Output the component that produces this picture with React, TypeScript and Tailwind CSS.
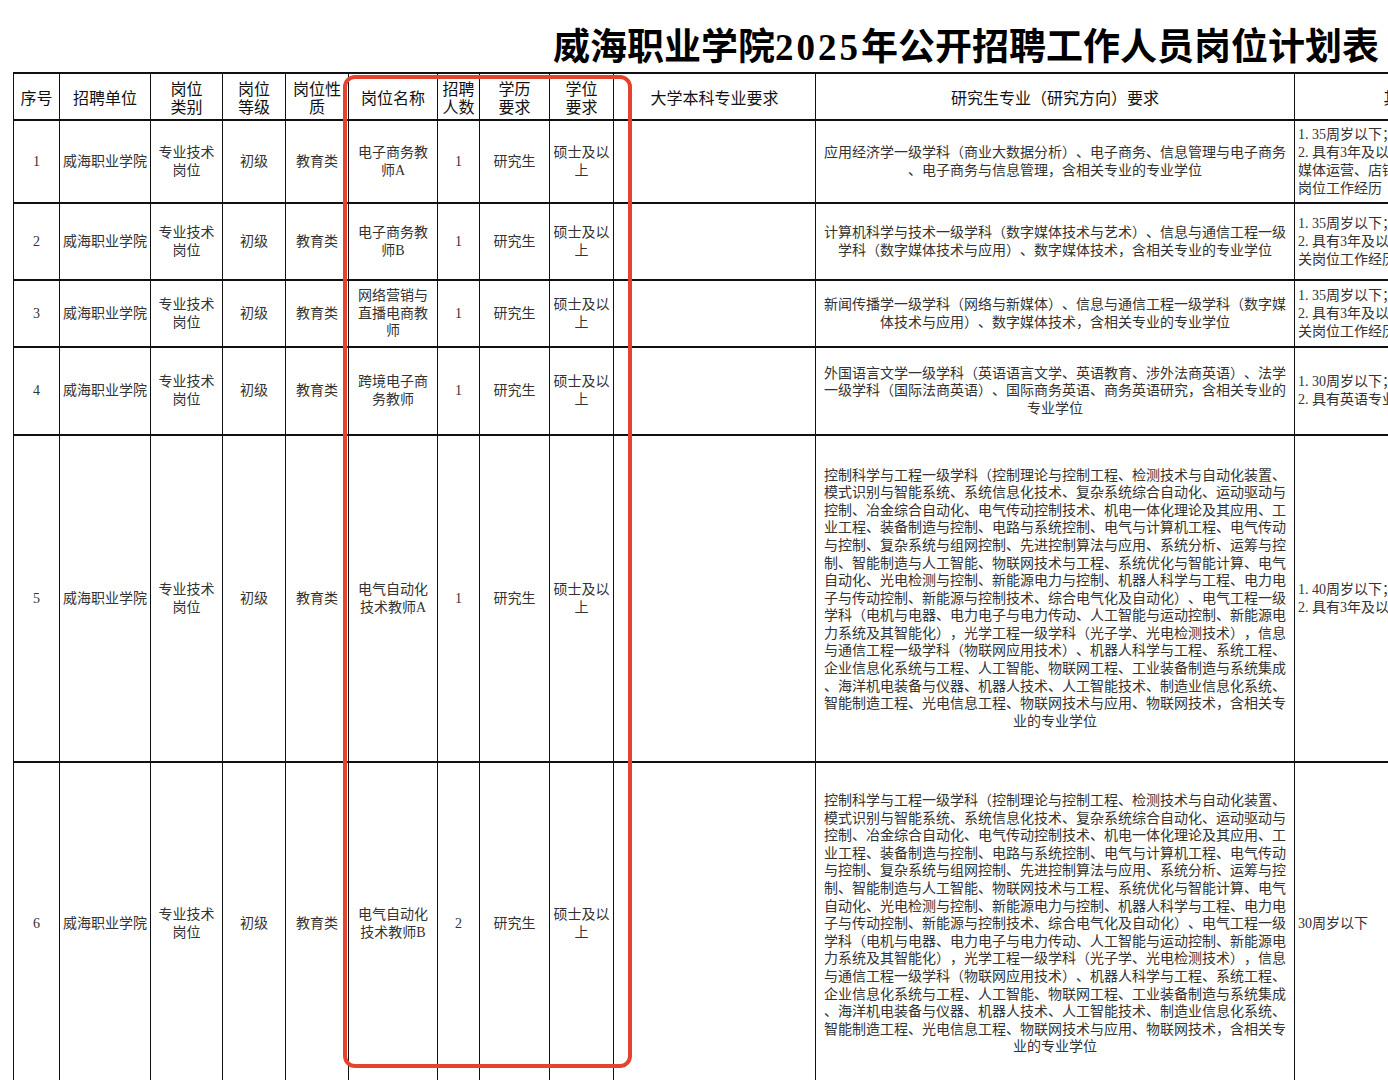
import React from "react";

type Row = {
  no: string;
  name: string[];
  count: string;
  h: string;
  research: string[];
  other: string[];
};

const rows: Row[] = [
  {
    no: "1",
    name: ["电子商务教", "师A"],
    count: "1",
    h: "h-[83px]",
    research: [
      "应用经济学一级学科（商业大数据分析）、电子商务、信息管理与电子商务",
      "、电子商务与信息管理，含相关专业的专业学位",
    ],
    other: ["1. 35周岁以下；", "2. 具有3年及以上电子商务、新", "媒体运营、店铺运营等相关", "岗位工作经历"],
  },
  {
    no: "2",
    name: ["电子商务教", "师B"],
    count: "1",
    h: "h-[77px]",
    research: [
      "计算机科学与技术一级学科（数字媒体技术与艺术）、信息与通信工程一级",
      "学科（数字媒体技术与应用）、数字媒体技术，含相关专业的专业学位",
    ],
    other: ["1. 35周岁以下；", "2. 具有3年及以上数字媒体相", "关岗位工作经历"],
  },
  {
    no: "3",
    name: ["网络营销与", "直播电商教", "师"],
    count: "1",
    h: "h-[67px]",
    research: [
      "新闻传播学一级学科（网络与新媒体）、信息与通信工程一级学科（数字媒",
      "体技术与应用）、数字媒体技术，含相关专业的专业学位",
    ],
    other: ["1. 35周岁以下；", "2. 具有3年及以上直播电商相", "关岗位工作经历"],
  },
  {
    no: "4",
    name: ["跨境电子商", "务教师"],
    count: "1",
    h: "h-[88px]",
    research: [
      "外国语言文学一级学科（英语语言文学、英语教育、涉外法商英语）、法学",
      "一级学科（国际法商英语）、国际商务英语、商务英语研究，含相关专业的",
      "专业学位",
    ],
    other: ["1. 30周岁以下；", "2. 具有英语专业八级证书"],
  },
];

const longResearch = [
  "控制科学与工程一级学科（控制理论与控制工程、检测技术与自动化装置、",
  "模式识别与智能系统、系统信息化技术、复杂系统综合自动化、运动驱动与",
  "控制、冶金综合自动化、电气传动控制技术、机电一体化理论及其应用、工",
  "业工程、装备制造与控制、电路与系统控制、电气与计算机工程、电气传动",
  "与控制、复杂系统与组网控制、先进控制算法与应用、系统分析、运筹与控",
  "制、智能制造与人工智能、物联网技术与工程、系统优化与智能计算、电气",
  "自动化、光电检测与控制、新能源电力与控制、机器人科学与工程、电力电",
  "子与传动控制、新能源与控制技术、综合电气化及自动化）、电气工程一级",
  "学科（电机与电器、电力电子与电力传动、人工智能与运动控制、新能源电",
  "力系统及其智能化），光学工程一级学科（光子学、光电检测技术），信息",
  "与通信工程一级学科（物联网应用技术）、机器人科学与工程、系统工程、",
  "企业信息化系统与工程、人工智能、物联网工程、工业装备制造与系统集成",
  "、海洋机电装备与仪器、机器人技术、人工智能技术、制造业信息化系统、",
  "智能制造工程、光电信息工程、物联网技术与应用、物联网技术，含相关专",
  "业的专业学位",
];

rows.push(
  {
    no: "5",
    name: ["电气自动化", "技术教师A"],
    count: "1",
    h: "h-[327px]",
    research: longResearch,
    other: ["1. 40周岁以下；", "2. 具有3年及以上相关工作经历"],
  },
  {
    no: "6",
    name: ["电气自动化", "技术教师B"],
    count: "2",
    h: "h-[324px]",
    research: longResearch,
    other: ["30周岁以下"],
  }
);

function Lines({ lines }: { lines: string[] }) {
  return (
    <>
      {lines.map((l, i) => (
        <div key={i}>{l}</div>
      ))}
    </>
  );
}

const hd =
  "border-x-[1.5px] border-y-2 border-[#111] px-[3px] text-center align-middle whitespace-nowrap font-['Noto_Sans_CJK_SC',sans-serif] text-[16px] leading-[18px] text-[#111] font-normal";
const bd =
  "border-x-[1.5px] border-y-2 border-[#111] px-[3px] text-center align-middle whitespace-nowrap text-[14px] leading-[17.6px] text-[#333]";

export default function App() {
  return (
    <div className="relative w-[1388px] h-[1080px] overflow-hidden bg-white font-['Liberation_Serif','Noto_Sans_CJK_SC',serif] [text-spacing-trim:space-all]">
      <div className="h-[72px] pl-[553px] pt-[24px] text-[37px] leading-[48px] font-bold text-black whitespace-nowrap">
        威海职业学院<span className="tracking-[3px]">2025</span>年公开招聘工作人员岗位计划表
      </div>
      <table className="ml-[13px] w-[1523px] table-fixed border-collapse">
        <colgroup>
          <col className="w-[46px]" />
          <col className="w-[91px]" />
          <col className="w-[72px]" />
          <col className="w-[63px]" />
          <col className="w-[63px]" />
          <col className="w-[89px]" />
          <col className="w-[42px]" />
          <col className="w-[70px]" />
          <col className="w-[64px]" />
          <col className="w-[202px]" />
          <col className="w-[479px]" />
          <col className="w-[242px]" />
        </colgroup>
        <thead>
          <tr className="h-[47px]">
            <th className={hd}>序号</th>
            <th className={hd}>招聘单位</th>
            <th className={hd}>
              <Lines lines={["岗位", "类别"]} />
            </th>
            <th className={hd}>
              <Lines lines={["岗位", "等级"]} />
            </th>
            <th className={hd}>
              <Lines lines={["岗位性", "质"]} />
            </th>
            <th className={hd}>岗位名称</th>
            <th className={hd}>
              <Lines lines={["招聘", "人数"]} />
            </th>
            <th className={hd}>
              <Lines lines={["学历", "要求"]} />
            </th>
            <th className={hd}>
              <Lines lines={["学位", "要求"]} />
            </th>
            <th className={hd}>大学本科专业要求</th>
            <th className={hd}>研究生专业（研究方向）要求</th>
            <th className={hd}>其他条件</th>
          </tr>
        </thead>
        <tbody>
          {rows.map((r) => (
            <tr key={r.no} className={r.h}>
              <td className={bd}>{r.no}</td>
              <td className={bd}>威海职业学院</td>
              <td className={bd}>
                <Lines lines={["专业技术", "岗位"]} />
              </td>
              <td className={bd}>初级</td>
              <td className={bd}>教育类</td>
              <td className={bd}>
                <Lines lines={r.name} />
              </td>
              <td className={bd}>{r.count}</td>
              <td className={bd}>研究生</td>
              <td className={bd}>
                <Lines lines={["硕士及以", "上"]} />
              </td>
              <td className={bd}></td>
              <td className="border-x-[1.5px] border-y-2 border-[#111] px-[6px] text-center align-middle whitespace-nowrap text-[14px] leading-[17.6px] text-[#333]">
                <Lines lines={r.research} />
              </td>
              <td className="border-x-[1.5px] border-y-2 border-[#111] pl-[3px] text-left align-middle whitespace-nowrap text-[14px] leading-[18px] text-[#333] overflow-hidden">
                <Lines lines={r.other} />
              </td>
            </tr>
          ))}
        </tbody>
      </table>
      <div className="absolute left-[343px] top-[75px] w-[289px] h-[993px] rounded-[12px] border-4 border-[#e5432e]" />
    </div>
  );
}
